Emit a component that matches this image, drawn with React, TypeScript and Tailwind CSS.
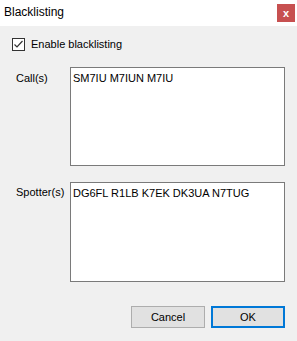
import React from 'react';

const font = { fontFamily: '"Liberation Sans", Arial, sans-serif' };

const TextBox: React.FC<{ value: string; height: string }> = ({ value, height }) => (
  <div
    className={`w-[215px] ${height} border border-[#7a7a7a] bg-white px-[2px] pt-[4px] text-[11px] leading-[13px] text-black`}
  >
    {value}
  </div>
);

export default function App() {
  return (
    <div
      className="flex h-[341px] w-[297px] flex-col bg-[#f0f0f0] text-[11px] text-black"
      style={font}
    >
      {/* title bar */}
      <div className="flex h-[26px] items-start justify-between bg-white pl-[4px] pr-[2px]">
        <span className="mt-[5px] text-[12px] leading-[15px]">Blacklisting</span>
        <div className="mt-[4px] flex h-[18px] w-[18px] items-center justify-center bg-[#c75050] text-[11px] font-bold leading-none text-white">
          x
        </div>
      </div>

      {/* checkbox */}
      <div className="ml-[12px] mt-[12px] flex h-[13px] items-center gap-[6px]">
        <div className="flex h-[13px] w-[13px] items-center justify-center border border-[#333] bg-white">
          <svg width="11" height="11" viewBox="0 0 11 11">
            <polyline points="1.5,5.5 4,8 9.5,2" fill="none" stroke="#333" strokeWidth="1.2" />
          </svg>
        </div>
        <span className="leading-[13px]">Enable blacklisting</span>
      </div>

      {/* calls */}
      <div className="mt-[16px] flex">
        <span className="ml-[16px] mt-[5px] w-[54px] leading-[13px]">Call(s)</span>
        <TextBox value="SM7IU M7IUN M7IU" height="h-[99px]" />
      </div>

      {/* spotters */}
      <div className="mt-[16px] flex">
        <span className="ml-[16px] mt-[4px] w-[54px] leading-[13px]">Spotter(s)</span>
        <TextBox value="DG6FL R1LB K7EK DK3UA N7TUG" height="h-[100px]" />
      </div>

      {/* buttons */}
      <div className="mt-[24px] flex justify-end gap-[6px] pr-[12px]">
        <button className="h-[22px] w-[74px] border border-[#adadad] bg-[#e1e1e1] text-[11px] leading-none">
          Cancel
        </button>
        <button className="h-[22px] w-[74px] border-2 border-[#0078d7] bg-[#e1e1e1] text-[11px] leading-none">
          OK
        </button>
      </div>
    </div>
  );
}
